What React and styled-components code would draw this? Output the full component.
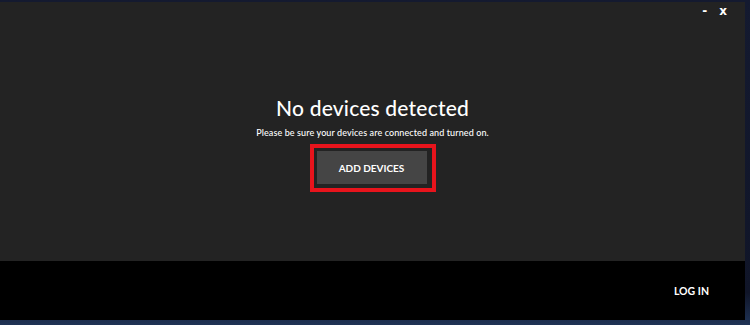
import React from 'react';
import styled, { createGlobalStyle } from 'styled-components';

const Global = createGlobalStyle`
    html, body {
        margin: 0;
        padding: 0;
        background: #11152a;
        font-family: Lato, "Open Sans", sans-serif;
        overflow: hidden;
    }
`;

const Desktop = styled.div`
    width: 750px;
    height: 325px;
    padding-top: 2px;
    box-sizing: border-box;
    background: linear-gradient(180deg, #141a30 0%, #101528 90%, #1f3355 100%);
`;

const Window = styled.div`
    width: 745px;
    height: 318px;
    display: flex;
    flex-direction: column;
    background: #232323;
`;

const Content = styled.div`
    position: relative;
    flex: 0 0 259px;
    display: flex;
    flex-direction: column;
    align-items: center;
    padding-top: 94px;
    box-sizing: border-box;
`;

const Controls = styled.div`
    position: absolute;
    top: 2px;
    right: 18px;
    display: flex;
    align-items: center;
    gap: 12px;
    color: #fff;
    font-family: "DejaVu Sans", sans-serif;
    font-size: 12px;
    font-weight: bold;
`;

const Title = styled.h1`
    margin: 0;
    color: #fff;
    font-size: 21px;
    line-height: 24px;
    font-weight: 500;
    letter-spacing: 0.2px;
`;

const Subtitle = styled.p`
    margin: 6px 0 0;
    color: #fff;
    font-size: 9px;
    line-height: 13px;
    font-weight: 500;
    letter-spacing: 0.1px;
`;

const Highlight = styled.div`
    margin-top: 5px;
    border: 4px solid #e8141c;
    padding: 3px 5px 4px 3px;
`;

const Button = styled.button`
    display: block;
    width: 110px;
    height: 33px;
    border: 0;
    background: #454545;
    color: #fff;
    font-family: Lato, sans-serif;
    font-size: 10px;
    font-weight: 700;
    cursor: pointer;
`;

const Footer = styled.div`
    flex: 1;
    background: #000;
    display: flex;
    align-items: center;
    justify-content: flex-end;
    padding-right: 36px;
`;

const Login = styled.span`
    color: #fff;
    font-size: 10.5px;
    font-weight: 700;
`;

export default function App() {
    return (
        <Desktop>
            <Global />
            <Window>
                <Content>
                    <Controls>
                        <span>-</span>
                        <span>x</span>
                    </Controls>
                    <Title>No devices detected</Title>
                    <Subtitle>Please be sure your devices are connected and turned on.</Subtitle>
                    <Highlight>
                        <Button>ADD DEVICES</Button>
                    </Highlight>
                </Content>
                <Footer>
                    <Login>LOG IN</Login>
                </Footer>
            </Window>
        </Desktop>
    );
}
